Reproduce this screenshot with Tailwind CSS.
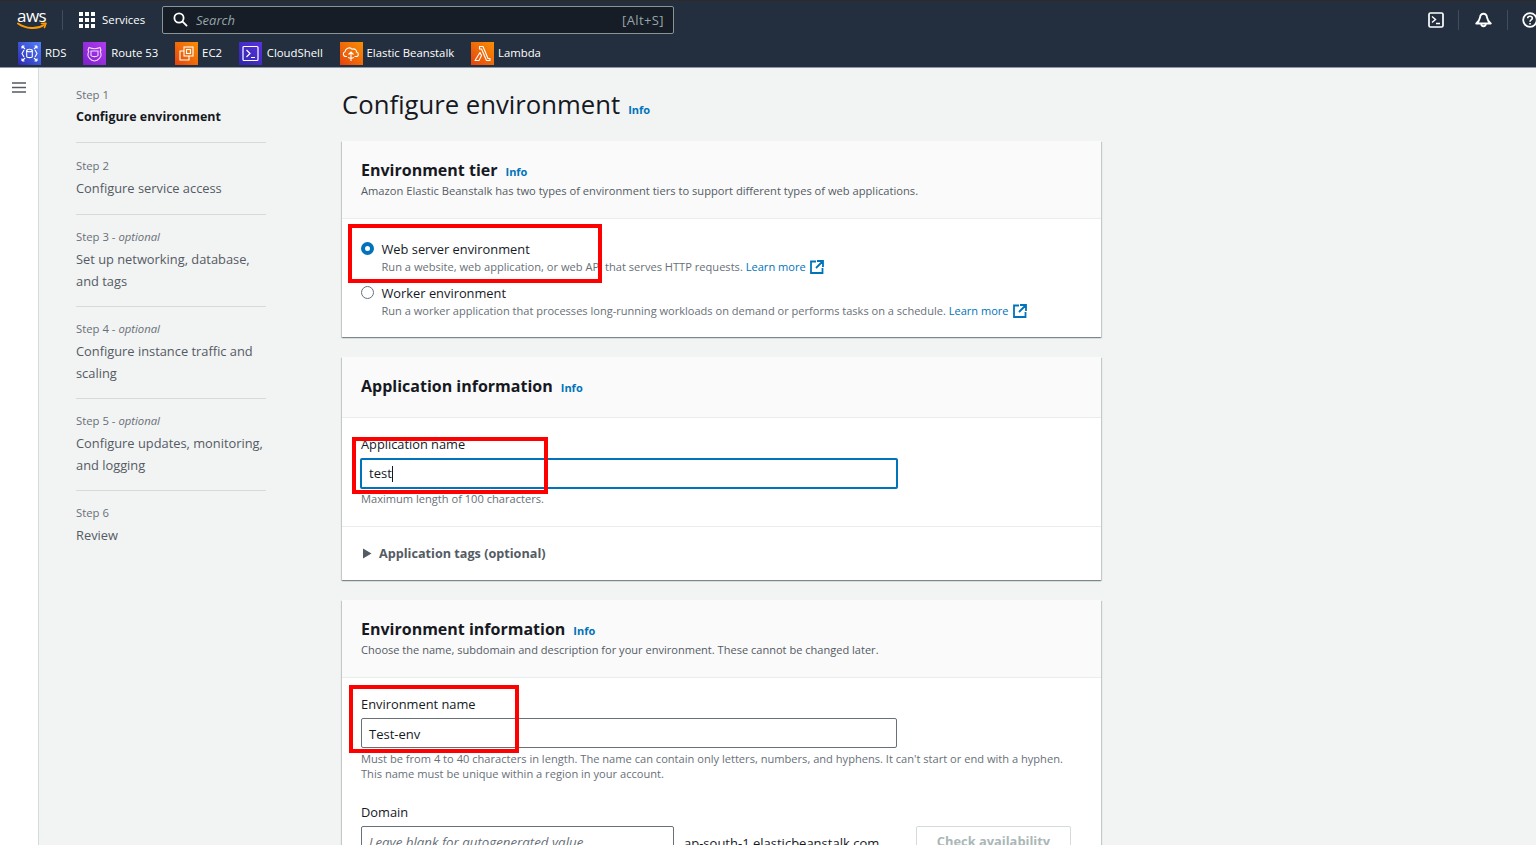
<!DOCTYPE html>
<html lang="en">
<head>
  <meta charset="UTF-8" />
  <meta name="viewport" content="width=device-width, initial-scale=1" />
  <title>Configure environment</title>
  <script src="https://cdn.jsdelivr.net/npm/@tailwindcss/browser@4"></script>
</head>
<body class="relative h-[845px] overflow-hidden bg-[#f2f3f3] font-['Open_Sans',sans-serif] text-[#16191f]">

  <!-- Top nav -->
  <header class="h-[68px] bg-[#232f3e] border-t border-t-[#2f2a26] border-b border-b-[#8d99a8] text-white">
    <div class="h-[37px] flex items-center">
      <div class="w-[63px] h-[20px] border-r border-[#414d5c] pl-[17px] relative">
        <span class="block text-[17px] leading-[15px] -mt-[2px] tracking-[-0.5px] font-normal">aws</span>
        <svg class="absolute left-[17px] top-[12px]" width="30" height="8" viewBox="0 0 30 8" fill="none">
          <path d="M1 1.5C9 7 20 7.5 27 3" stroke="#ff9900" stroke-width="2" stroke-linecap="round"/>
          <path d="M24.5 1.5L29 1.2L27.5 5.5" stroke="#ff9900" stroke-width="1.6" stroke-linecap="round" stroke-linejoin="round"/>
        </svg>
      </div>
      <div class="ml-[16px] grid grid-cols-3 gap-[2px] w-[16px]">
        <i class="w-[4px] h-[4px] bg-white"></i><i class="w-[4px] h-[4px] bg-white"></i><i class="w-[4px] h-[4px] bg-white"></i>
        <i class="w-[4px] h-[4px] bg-white"></i><i class="w-[4px] h-[4px] bg-white"></i><i class="w-[4px] h-[4px] bg-white"></i>
        <i class="w-[4px] h-[4px] bg-white"></i><i class="w-[4px] h-[4px] bg-white"></i><i class="w-[4px] h-[4px] bg-white"></i>
      </div>
      <span class="ml-[7px] text-[11.4px] w-[60px]">Services</span>
      <div class="w-[512px] h-[28px] flex items-center bg-[#161d26] border border-[#879596] rounded-[2px] pl-[10px] pr-[9px]">
        <svg width="15" height="15" viewBox="0 0 15 15" fill="none" stroke="#fff" stroke-width="1.8" stroke-linecap="round">
          <circle cx="6" cy="6" r="4.6"/><path d="M9.6 9.6L13.6 13.6"/>
        </svg>
        <span class="ml-[8px] pt-[2px] text-[13px] italic text-[#95a5a6]">Search</span>
        <span class="ml-auto pt-[2px] text-[13px] tracking-[0.4px] text-[#95a5a6]">[Alt+S]</span>
      </div>
      <div class="ml-auto flex items-center h-[20px] w-[108px] shrink-0 overflow-hidden">
        <svg class="shrink-0" width="16" height="16" viewBox="0 0 16 16" fill="none" stroke="#fff" stroke-width="1.7">
          <rect x="1" y="1" width="14" height="14" rx="1.5"/><path d="M4 4.5L7.5 7.5L4 10.5M8 11.5H12" stroke-width="1.4"/>
        </svg>
        <span class="shrink-0 ml-[14px] w-px h-[20px] bg-[#414d5c]"></span>
        <svg class="shrink-0 ml-[16px]" width="17" height="16" viewBox="0 0 17 16" fill="none" stroke="#fff" stroke-width="1.8" stroke-linejoin="round">
          <path d="M1.2 11.5C3.5 10 4.5 8 5 5.5C5.5 0.5 11.5 0.5 12 5.5C12.5 8 13.5 10 15.8 11.5Z"/>
          <path d="M6.3 12C6.3 15 10.7 15 10.7 12"/>
        </svg>
        <span class="shrink-0 ml-[15px] w-px h-[20px] bg-[#414d5c]"></span>
        <svg class="shrink-0 ml-[14px]" width="16" height="16" viewBox="0 0 16 16" fill="none" stroke="#fff" stroke-width="1.8">
          <circle cx="8" cy="8" r="6.8"/><path d="M5.7 6.2C5.7 3.6 10.3 3.6 10.3 6.2C10.3 8 8 7.8 8 9.7M8 11V12.4" stroke-width="1.6"/>
        </svg>
      </div>
    </div>
    <div class="h-[29px] flex items-center pl-[18px] pt-px gap-[16.75px] text-[11.35px]">
      <div class="flex items-center gap-[4px]">
        <span class="w-[23px] h-[23px] bg-gradient-to-tr from-[#2e27ad] to-[#527fff] flex items-center justify-center">
          <svg width="17" height="17" viewBox="0 0 17 17" fill="none" stroke="#fff" stroke-width="1.1">
            <ellipse cx="8.5" cy="5.5" rx="2.8" ry="1.2"/><path d="M5.7 5.5V11.5C5.7 13 11.3 13 11.3 11.5V5.5"/>
            <path d="M3 5L1 8.5L3 12M14 5L16 8.5L14 12M1 1L4 4M1 1H3.5M1 1V3.5M16 1L13 4M16 1H13.5M16 1V3.5M1 16L4 13M1 16H3.5M1 16V13.5M16 16L13 13M16 16H13.5M16 16V13.5"/>
          </svg>
        </span>
        <span>RDS</span>
      </div>
      <div class="flex items-center gap-[5px]">
        <span class="w-[23px] h-[23px] bg-gradient-to-tr from-[#7d1fc9] to-[#b03bf0] flex items-center justify-center">
          <svg width="17" height="17" viewBox="0 0 17 17" fill="none" stroke="#f3d9ff" stroke-width="1.1">
            <path d="M3 2.5C6 3.8 11 3.8 14 2.5L15 5C14 6 14 7 15 8.5C16 12 12 15.5 8.5 16C5 15.5 1 12 2 8.5C3 7 3 6 2 5Z"/>
            <path d="M5 6H12V10.5C11 12 6 12 5 10.5Z"/>
          </svg>
        </span>
        <span>Route 53</span>
      </div>
      <div class="flex items-center gap-[4px]">
        <span class="w-[23px] h-[23px] bg-gradient-to-tr from-[#e7400c] to-[#f78e04] flex items-center justify-center">
          <svg width="17" height="17" viewBox="0 0 17 17" fill="none" stroke="#fff" stroke-width="1.1">
            <rect x="6" y="2" width="9" height="9"/><rect x="8.5" y="4.5" width="4" height="4"/>
            <path d="M6 6H2V15H11V11"/>
          </svg>
        </span>
        <span>EC2</span>
      </div>
      <div class="flex items-center gap-[5px]">
        <span class="w-[23px] h-[23px] bg-gradient-to-tr from-[#2e27ad] to-[#5a30e0] flex items-center justify-center">
          <svg width="17" height="17" viewBox="0 0 17 17" fill="none" stroke="#fff" stroke-width="1.2">
            <rect x="1" y="1.5" width="15" height="14" rx="1"/><path d="M4.5 5L8 8.5L4.5 12M9 12.5H13"/>
          </svg>
        </span>
        <span>CloudShell</span>
      </div>
      <div class="flex items-center gap-[4px]">
        <span class="w-[23px] h-[23px] bg-gradient-to-tr from-[#e7400c] to-[#f78e04] flex items-center justify-center">
          <svg width="18" height="17" viewBox="0 0 18 17" fill="none" stroke="#fff" stroke-width="1.1">
            <path d="M5 11.5H4C0.8 11.5 0.5 7.5 3 6.8C3.3 3.5 7.5 1.5 10 4.2C13 3 15 5.5 14.5 7C17 7.5 17 11.5 14 11.5H12.5"/>
            <path d="M9 16V7M6.5 9.5L9 7L11.5 9.5M6 12.5L9 13.5L12 12.5"/>
          </svg>
        </span>
        <span>Elastic Beanstalk</span>
      </div>
      <div class="flex items-center gap-[4px]">
        <span class="w-[23px] h-[23px] bg-gradient-to-tr from-[#e7400c] to-[#f78e04] flex items-center justify-center">
          <svg width="17" height="17" viewBox="0 0 17 17" fill="none" stroke="#fff" stroke-width="1.1" stroke-linejoin="round">
            <path d="M5.5 1.5H9L14 13.5H16V15.5H12.5L7.5 4H5.5ZM6 7.5L7.5 10.5L5 15.5H1Z"/>
          </svg>
        </span>
        <span>Lambda</span>
      </div>
    </div>
  </header>

  <div class="flex h-[777px]">
    <!-- Left rail -->
    <div class="w-[39px] shrink-0 bg-white border-r border-[#d5dbdb] pl-[12px] pt-[14px]">
      <svg width="14" height="11" viewBox="0 0 14 11" fill="none" stroke="#545b64" stroke-width="1.6">
        <path d="M0 1H14M0 5.5H14M0 10H14"/>
      </svg>
    </div>

    <!-- Wizard steps -->
    <nav class="w-[303px] shrink-0 pl-[37px] pr-[76px] pt-[16px] text-[12.85px] leading-[22px] text-[#545b64]">
      <div class="pb-[14px] border-b border-[#d5dbdb]">
        <p class="text-[11.3px] leading-[22px] text-[#687078]">Step 1</p>
        <p class="font-bold text-[#16191f] text-[12.45px]">Configure environment</p>
      </div>
      <div class="pt-[12px] pb-[15px] border-b border-[#d5dbdb]">
        <p class="text-[11.3px] leading-[22px] text-[#687078]">Step 2</p>
        <p>Configure service access</p>
      </div>
      <div class="pt-[11px] pb-[14px] border-b border-[#d5dbdb]">
        <p class="text-[11.3px] leading-[22px] text-[#687078]">Step 3 - <i>optional</i></p>
        <p>Set up networking, database, and tags</p>
      </div>
      <div class="pt-[11px] pb-[14px] border-b border-[#d5dbdb]">
        <p class="text-[11.3px] leading-[22px] text-[#687078]">Step 4 - <i>optional</i></p>
        <p>Configure instance traffic and scaling</p>
      </div>
      <div class="pt-[11px] pb-[14px] border-b border-[#d5dbdb]">
        <p class="text-[11.3px] leading-[22px] text-[#687078]">Step 5 - <i>optional</i></p>
        <p>Configure updates, monitoring, and logging</p>
      </div>
      <div class="pt-[11px]">
        <p class="text-[11.3px] leading-[22px] text-[#687078]">Step 6</p>
        <p>Review</p>
      </div>
    </nav>

    <!-- Main form -->
    <main class="w-[759px] shrink-0">
      <h1 class="h-[73px] flex items-baseline gap-[8px] pt-[18px] text-[25.7px] leading-[38px] font-normal text-[#16191f]">
        Configure environment <a class="text-[11px] font-bold text-[#0073bb]">Info</a>
      </h1>

      <section class="bg-white shadow-[0_1px_1px_0_rgba(0,28,36,0.3),1px_1px_1px_0_rgba(0,28,36,0.15),-1px_1px_1px_0_rgba(0,28,36,0.15)] h-[196px]">
        <div class="h-[78px] bg-[#fafafa] border-b border-[#eaeded] px-[19px] pt-[17px]">
          <h2 class="flex items-baseline gap-[8px] text-[16px] leading-[24px] font-bold text-[#16191f]">Environment tier <a class="text-[11px] font-bold text-[#0073bb]">Info</a></h2>
          <p class="-mt-[1px] text-[11.15px] leading-[16px] text-[#545b64]">Amazon Elastic Beanstalk has two types of environment tiers to support different types of web applications.</p>
        </div>
        <div class="px-[19px] pt-[20px]">
          <div class="flex">
            <span class="w-[13px] h-[13px] mt-[3px] rounded-full border-[4px] border-[#0073bb] bg-white shrink-0"></span>
            <div class="ml-[7.5px]">
              <p class="text-[12.85px] leading-[20px] text-[#16191f]">Web server environment</p>
              <p class="flex items-center text-[11.1px] leading-[16px] text-[#687078]">Run a website, web application, or web API that serves HTTP requests.&nbsp;<a class="text-[#0073bb]">Learn more</a>
                <svg class="ml-[4px]" width="14" height="14" viewBox="0 0 14 14" fill="none" stroke="#0073bb" stroke-width="1.8"><path d="M6 1.5H1V13H12.5V8M7 1H13V7M13 1L6 8"/></svg>
              </p>
            </div>
          </div>
          <div class="flex mt-[8px]">
            <span class="w-[13px] h-[13px] mt-[3px] rounded-full border border-[#687078] bg-white shrink-0"></span>
            <div class="ml-[7.5px]">
              <p class="text-[12.85px] leading-[20px] text-[#16191f]">Worker environment</p>
              <p class="flex items-center text-[11.05px] leading-[16px] text-[#687078]">Run a worker application that processes long-running workloads on demand or performs tasks on a schedule.&nbsp;<a class="text-[#0073bb]">Learn more</a>
                <svg class="ml-[4px]" width="14" height="14" viewBox="0 0 14 14" fill="none" stroke="#0073bb" stroke-width="1.8"><path d="M6 1.5H1V13H12.5V8M7 1H13V7M13 1L6 8"/></svg>
              </p>
            </div>
          </div>
        </div>
      </section>

      <section class="mt-[20px] bg-white shadow-[0_1px_1px_0_rgba(0,28,36,0.3),1px_1px_1px_0_rgba(0,28,36,0.15),-1px_1px_1px_0_rgba(0,28,36,0.15)] h-[223px]">
        <div class="h-[61px] bg-[#fafafa] border-b border-[#eaeded] px-[19px] pt-[17px]">
          <h2 class="flex items-baseline gap-[8px] text-[16px] leading-[24px] font-bold text-[#16191f]">Application information <a class="text-[11px] font-bold text-[#0073bb]">Info</a></h2>
        </div>
        <div class="h-[109px] border-b border-[#eaeded] px-[19px] pt-[16px]">
          <label class="block text-[12.8px] leading-[20px] text-[#16191f]">Application name</label>
          <div class="mt-[4px] -ml-px w-[538px] h-[31px] flex items-center pl-[7px] pr-[8px] pt-px border-2 border-[#0073bb] rounded-[2px] text-[13px] text-[#16191f]">test<span class="w-px h-[16px] bg-[#16191f]"></span></div>
          <p class="mt-[2px] text-[11.1px] leading-[16px] text-[#687078]">Maximum length of 100 characters.</p>
        </div>
        <div class="flex items-center h-[53px] px-[20px] text-[12.65px] font-bold text-[#545b64]">
          <svg width="10" height="11" viewBox="0 0 10 11" fill="#545b64"><path d="M1 0.5L9.5 5.5L1 10.5Z"/></svg>
          <span class="ml-[7px]">Application tags (optional)</span>
        </div>
      </section>

      <section class="mt-[20px] bg-white shadow-[0_1px_1px_0_rgba(0,28,36,0.3),1px_1px_1px_0_rgba(0,28,36,0.15),-1px_1px_1px_0_rgba(0,28,36,0.15)] h-[300px]">
        <div class="h-[78px] bg-[#fafafa] border-b border-[#eaeded] px-[19px] pt-[17px]">
          <h2 class="flex items-baseline gap-[8px] text-[16px] leading-[24px] font-bold text-[#16191f]">Environment information <a class="text-[11px] font-bold text-[#0073bb]">Info</a></h2>
          <p class="-mt-[1px] text-[11.05px] leading-[16px] text-[#545b64]">Choose the name, subdomain and description for your environment. These cannot be changed later.</p>
        </div>
        <div class="px-[19px] pt-[16px]">
          <label class="block text-[12.85px] leading-[20px] text-[#16191f]">Environment name</label>
          <div class="mt-[4px] w-[536px] h-[30px] flex items-center pl-[7px] pr-[8px] pt-[3px] border border-[#687078] rounded-[2px] text-[13px] text-[#16191f]">Test-env</div>
          <p class="mt-[3px] text-[11.1px] leading-[15px] text-[#687078]">Must be from 4 to 40 characters in length. The name can contain only letters, numbers, and hyphens. It can't start or end with a hyphen.<br>This name must be unique within a region in your account.</p>
          <label class="block mt-[21px] text-[12.85px] leading-[20px] text-[#16191f]">Domain</label>
          <div class="mt-[4px] flex items-start">
            <div class="w-[313px] h-[30px] flex items-center pl-[7px] pr-[8px] pt-[3px] border border-[#687078] rounded-[2px] text-[13.3px] italic text-[#687078]">Leave blank for autogenerated value</div>
            <span class="ml-[10px] pt-[7px] text-[13px] leading-[20px] text-[#16191f]">ap-south-1.elasticbeanstalk.com</span>
            <div class="ml-auto mr-[11px] w-[155px] h-[30px] flex items-center justify-center pt-[2px] border border-[#d5dbdb] rounded-[2px] text-[12.85px] font-bold text-[#aab7b8]">Check availability</div>
          </div>
        </div>
      </section>
    </main>
  </div>

  <!-- Red annotation boxes drawn on the screenshot -->
  <div class="absolute left-[348px] top-[224px] w-[254px] h-[59px] border-[4px] border-[#ff0000]"></div>
  <div class="absolute left-[352px] top-[437px] w-[196px] h-[57px] border-[4px] border-[#ff0000]"></div>
  <div class="absolute left-[349px] top-[685px] w-[170px] h-[68px] border-[4px] border-[#ff0000]"></div>
</body>
</html>
